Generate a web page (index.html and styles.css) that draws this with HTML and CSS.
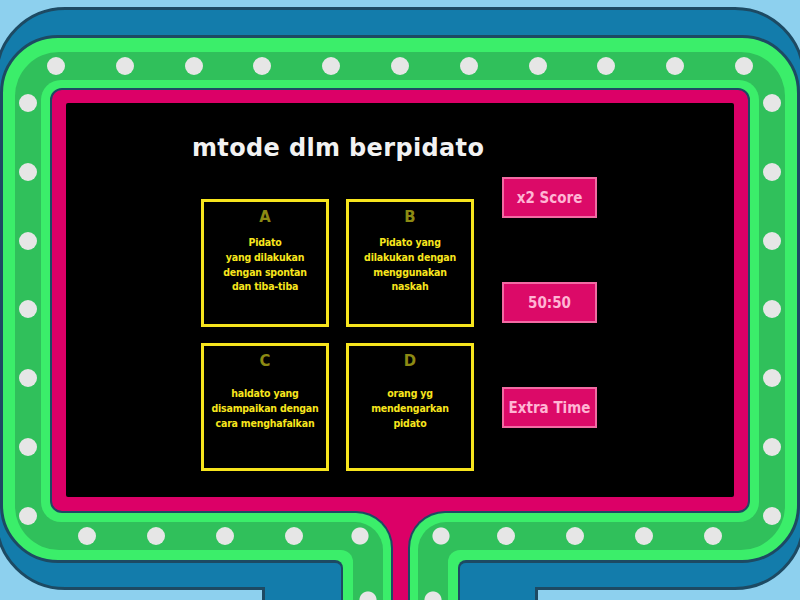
FILE: index.html
```html
<!DOCTYPE html>
<html lang="id">
<head>
<meta charset="utf-8">
<title>Gameshow Quiz</title>
<link rel="stylesheet" href="styles.css">
</head>
<body>
<div class="stage">
  <div class="shell">
    <div class="frame">
      <div class="band">
        <div class="lights lights-top">
          <span class="dot"></span><span class="dot"></span><span class="dot"></span><span class="dot"></span><span class="dot"></span><span class="dot"></span><span class="dot"></span><span class="dot"></span><span class="dot"></span><span class="dot"></span><span class="dot"></span>
        </div>
        <div class="lights lights-side lights-left">
          <span class="dot"></span><span class="dot"></span><span class="dot"></span><span class="dot"></span><span class="dot"></span><span class="dot"></span><span class="dot"></span>
        </div>
        <div class="inner">
          <div class="screen">
            <main class="board">
              <h1 class="question">mtode dlm berpidato</h1>
              <div class="play">
                <div class="answers">
                  <div class="answer">
                    <div class="letter">A</div>
                    <p class="text"><span>Pidato<br>yang dilakukan<br>dengan spontan<br>dan tiba-tiba</span></p>
                  </div>
                  <div class="answer">
                    <div class="letter">B</div>
                    <p class="text"><span>Pidato yang<br>dilakukan dengan<br>menggunakan<br>naskah</span></p>
                  </div>
                  <div class="answer">
                    <div class="letter">C</div>
                    <p class="text"><span>haldato yang<br>disampaikan dengan<br>cara menghafalkan</span></p>
                  </div>
                  <div class="answer">
                    <div class="letter">D</div>
                    <p class="text"><span>orang yg<br>mendengarkan<br>pidato</span></p>
                  </div>
                </div>
                <div class="powerups">
                  <button class="power">x2 Score</button>
                  <button class="power">50:50</button>
                  <button class="power">Extra Time</button>
                </div>
              </div>
            </main>
          </div>
        </div>
        <div class="lights lights-side lights-right">
          <span class="dot"></span><span class="dot"></span><span class="dot"></span><span class="dot"></span><span class="dot"></span><span class="dot"></span><span class="dot"></span>
        </div>
        <div class="lights lights-bottom">
          <div class="group"><span class="dot"></span><span class="dot"></span><span class="dot"></span><span class="dot"></span></div>
          <div class="group"><span class="dot"></span><span class="dot"></span><span class="dot"></span><span class="dot"></span></div>
        </div>
      </div>
    </div>
  </div>
  <div class="podium"></div>
  <div class="stem">
    <div class="post post-left">
      <div class="mid"><div class="outer"><div class="well"></div></div></div>
    </div>
    <div class="post post-right">
      <div class="mid"><div class="outer"><div class="well"></div></div></div>
    </div>
  </div>
</div>
</body>
</html>
```

FILE: styles.css
```css
html, body {
  margin: 0;
  padding: 0;
}

body {
  background: #8dd0ee;
  font-family: "DejaVu Sans", sans-serif;
}

.stage {
  position: relative;
  width: 800px;
  height: 600px;
  overflow: hidden;
  background: #8dd0ee;
}

/* outer blue rim */
.shell {
  box-sizing: border-box;
  width: 810px;
  height: 583px;
  margin: 7px 0 0 -5px;
  padding: 25px 2px 0;
  border: 3px solid #1d4a63;
  border-radius: 70px;
  background: #137cab;
}

/* green light frame */
.frame {
  box-sizing: border-box;
  width: 800px;
  height: 528px;
  padding: 14px 12px 10px;
  border: 3px solid #1d4a63;
  border-radius: 58px;
  background: #3bee6a;
}

.band {
  box-sizing: border-box;
  height: 100%;
  display: grid;
  grid-template-columns: 26px minmax(0, 1fr) 26px;
  grid-template-rows: 28px minmax(0, 1fr) 28px;
  background: #30c05b;
  border-radius: 44px;
}

.lights {
  display: flex;
}

.dot {
  flex: none;
  width: 18px;
  height: 18px;
  border-radius: 50%;
  background: #e6e6e6;
}

.lights-top {
  grid-column: 1 / 4;
  grid-row: 1;
  align-items: center;
  padding-left: 32px;
  gap: 50.8px;
}

.lights-side {
  grid-row: 2;
  flex-direction: column;
  align-items: center;
  padding-top: 14px;
  gap: 50.83px;
}

.lights-left { grid-column: 1; }
.lights-right { grid-column: 3; }

.lights-bottom {
  grid-column: 1 / 4;
  grid-row: 3;
  align-items: center;
  justify-content: space-between;
  padding: 0 63px;
}

.group {
  display: flex;
  gap: 51px;
}

.inner {
  grid-column: 2;
  grid-row: 2;
  display: flex;
  padding: 8px 9px 9px;
  background: #3bee6a;
  border-radius: 20px;
}

.screen {
  flex: 1;
  display: flex;
  padding: 13px 14px 14px;
  border: 2px solid #1d4a63;
  border-radius: 12px;
  background: #dc0067;
}

.board {
  flex: 1;
  display: block;
  padding: 32px 0 0 126px;
  background: #000;
  border-radius: 2px;
}

.question {
  margin: 0;
  font-family: "DejaVu Sans", sans-serif;
  font-weight: bold;
  font-size: 24px;
  line-height: 27px;
  letter-spacing: 0.35px;
  color: #f2f2f2;
}

.play {
  display: flex;
  align-items: flex-start;
  margin: 15px 0 0 9px;
}

.answers {
  display: grid;
  grid-template-columns: 128px 128px;
  grid-auto-rows: 128px;
  column-gap: 17px;
  row-gap: 16px;
  margin-top: 22px;
}

.answer {
  box-sizing: border-box;
  display: flex;
  flex-direction: column;
  align-items: stretch;
  border: 3px solid #f7e51d;
}

.letter {
  padding-top: 5px;
  font-family: "DejaVu Sans Condensed", "DejaVu Sans", sans-serif;
  font-weight: bold;
  font-size: 16.5px;
  line-height: 20px;
  text-align: center;
  color: #8c8a13;
}

.text {
  flex: 1;
  display: flex;
  align-items: center;
  justify-content: center;
  margin: 3px 0 0;
  padding: 0 0 25px;
  font-family: "DejaVu Sans Condensed", "DejaVu Sans", sans-serif;
  font-weight: bold;
  font-size: 10.5px;
  line-height: 14.7px;
  letter-spacing: -0.2px;
  text-align: center;
  white-space: nowrap;
  color: #f7e51d;
}

.powerups {
  display: flex;
  flex-direction: column;
  gap: 64px;
  margin-left: 28px;
}

.power {
  box-sizing: border-box;
  width: 95px;
  height: 41px;
  padding: 0;
  border: 2px solid #f26aa3;
  background: #dc0a68;
  color: #ffb5d4;
  font-family: "DejaVu Sans Condensed", "DejaVu Sans", sans-serif;
  font-weight: bold;
  font-size: 15px;
}

/* podium block below the screen: only its lower part shows past the rim */
.podium {
  position: absolute;
  left: 262px;
  top: 587px;
  box-sizing: border-box;
  width: 276px;
  height: 13px;
  background: #137cab;
  border-left: 3px solid #1d4a63;
  border-right: 3px solid #1d4a63;
}

/* pink stem that drops out of the screen */
.stem {
  position: absolute;
  left: 330px;
  top: 511px;
  width: 140px;
  height: 89px;
  display: flex;
  justify-content: space-between;
  background: #dc0067;
}

.post {
  box-sizing: border-box;
  height: 89px;
  display: flex;
  background: #3bee6a;
  border-top: 2px solid #1d4a63;
}

.post-left {
  width: 63px;
  padding: 9px 8px 0 0;
  border-right: 2px solid #1d4a63;
  border-top-right-radius: 37px;
}

.post-right {
  width: 62px;
  padding: 9px 0 0 8px;
  border-left: 2px solid #1d4a63;
  border-top-left-radius: 37px;
}

.mid {
  flex: 1;
  display: flex;
}

.post-left .mid {
  padding: 28px 30px 0 0;
  border-top-right-radius: 28px;
  background:
    radial-gradient(circle 9px at 30px 14px, #e6e6e6 90%, rgba(230,230,230,0) 100%),
    radial-gradient(circle 9px at 38px 78px, #e6e6e6 90%, rgba(230,230,230,0) 100%),
    #30c05b;
}

.post-right .mid {
  padding: 28px 0 0 30px;
  border-top-left-radius: 28px;
  background:
    radial-gradient(circle 9px at 23px 14px, #e6e6e6 90%, rgba(230,230,230,0) 100%),
    radial-gradient(circle 9px at 15px 78px, #e6e6e6 90%, rgba(230,230,230,0) 100%),
    #30c05b;
}

.outer {
  flex: 1;
  display: flex;
  background: #3bee6a;
}

.post-left .outer {
  padding: 10px 10px 0 0;
  border-top-right-radius: 12px;
}

.post-right .outer {
  padding: 10px 0 0 10px;
  border-top-left-radius: 12px;
}

.well {
  flex: 1;
  background: #137cab;
  border-top: 3px solid #1d4a63;
}

.post-left .well {
  border-right: 2px solid #1d4a63;
  border-top-right-radius: 8px;
}

.post-right .well {
  border-left: 2px solid #1d4a63;
  border-top-left-radius: 8px;
}
```
